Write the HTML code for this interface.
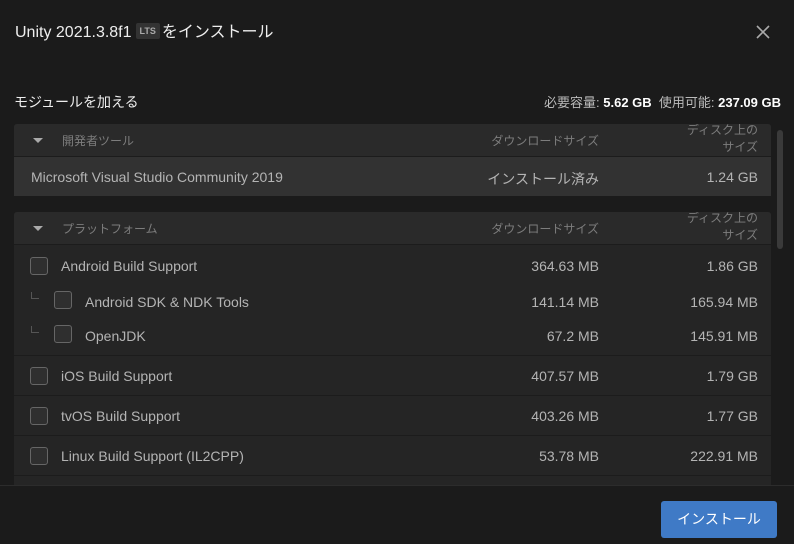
<!DOCTYPE html>
<html><head><meta charset="utf-8"><style>
*{margin:0;padding:0;box-sizing:border-box}
body{width:794px;height:544px;background:#1b1b1b;font-family:"Liberation Sans","Noto Sans CJK JP",sans-serif;color:#c4c4c4;position:relative;overflow:hidden}
.abs{position:absolute}
.title{left:15px;top:18px;font-size:16px;color:#eee;white-space:nowrap;font-weight:500}
.lts{display:inline-block;background:#333;color:#aaa;font-size:9px;font-weight:bold;padding:3px 4px;border-radius:2px;vertical-align:3px;margin:0 2px 0 4px}
.sec{left:14px;width:757px;background:#252525;border-radius:3px 3px 0 0;overflow:hidden}
.hdr{height:33px;background:#2a2a2a;border-bottom:1px solid #1c1c1c;position:relative;font-size:12px;color:#7d7d7d}
.row{position:relative;border-bottom:1px solid #1c1c1c;font-size:14px;color:#b4b4b4}
.c1{position:absolute;right:172px;text-align:right;white-space:nowrap}
.c2{position:absolute;right:13px;text-align:right;white-space:nowrap}
.cb{position:absolute;width:18px;height:18px;border:1px solid #666;border-radius:3px;background:#2f2f2f}
.tri{position:absolute;left:19px;top:14px;width:0;height:0;border-left:5px solid transparent;border-right:5px solid transparent;border-top:5px solid #aaa}
.tree{position:absolute;width:8px;height:7px;border-left:1px solid #555;border-bottom:1px solid #555}
.pl span{color:#b4b4b4}
</style></head><body>
<div class="abs title">Unity 2021.3.8f1<span class="lts">LTS</span><span style="font-weight:normal">をインストール</span></div>
<svg class="abs" style="left:755px;top:24px" width="16" height="16"><path d="M2 2L14 14M14 2L2 14" stroke="#aaa" stroke-width="1.6"/></svg>
<div class="abs" style="left:14px;top:92px;font-size:14px;color:#eee">モジュールを加える</div>
<div class="abs" style="right:13px;top:92px;font-size:13px;color:#bbb;white-space:nowrap">必要容量: <b style="color:#fff">5.62 GB</b>&nbsp; 使用可能: <b style="color:#fff">237.09 GB</b></div>

<div class="abs sec" style="top:124px;height:72px">
 <div class="hdr"><div class="tri"></div><span style="position:absolute;left:48px;top:8px">開発者ツール</span>
 <span class="c1" style="top:8px">ダウンロードサイズ</span><span class="c2" style="top:-2px;line-height:17px">ディスク上の<br>サイズ</span></div>
 <div class="row" style="height:39px;background:#323232;border:none"><span style="position:absolute;left:17px;top:12px">Microsoft Visual Studio Community 2019</span><span class="c1" style="top:12px">インストール済み</span><span class="c2" style="top:12px">1.24 GB</span></div>
</div>

<div class="abs sec pl" style="top:212px;height:273px">
 <div class="hdr"><div class="tri"></div><span style="position:absolute;left:48px;top:8px;color:#7d7d7d">プラットフォーム</span>
 <span class="c1" style="top:8px;color:#7d7d7d">ダウンロードサイズ</span><span class="c2" style="top:-2px;line-height:17px;color:#7d7d7d">ディスク上の<br>サイズ</span></div>
 <div style="position:relative;height:111px;border-bottom:1px solid #1c1c1c">
  <div class="cb" style="left:16px;top:12px"></div><span style="position:absolute;left:47px;top:13px;font-size:14px">Android Build Support</span><span class="c1" style="top:13px;font-size:14px">364.63 MB</span><span class="c2" style="top:13px;font-size:14px">1.86 GB</span>
  <div class="tree" style="left:17px;top:47px"></div><div class="cb" style="left:40px;top:46px"></div><span style="position:absolute;left:71px;top:49px;font-size:14px">Android SDK &amp; NDK Tools</span><span class="c1" style="top:49px;font-size:14px">141.14 MB</span><span class="c2" style="top:49px;font-size:14px">165.94 MB</span>
  <div class="tree" style="left:17px;top:81px"></div><div class="cb" style="left:40px;top:80px"></div><span style="position:absolute;left:71px;top:83px;font-size:14px">OpenJDK</span><span class="c1" style="top:83px;font-size:14px">67.2 MB</span><span class="c2" style="top:83px;font-size:14px">145.91 MB</span>
 </div>
 <div class="row" style="height:40px"><div class="cb" style="left:16px;top:11px"></div><span style="position:absolute;left:47px;top:12px">iOS Build Support</span><span class="c1" style="top:12px">407.57 MB</span><span class="c2" style="top:12px">1.79 GB</span></div>
 <div class="row" style="height:40px"><div class="cb" style="left:16px;top:11px"></div><span style="position:absolute;left:47px;top:12px">tvOS Build Support</span><span class="c1" style="top:12px">403.26 MB</span><span class="c2" style="top:12px">1.77 GB</span></div>
 <div class="row" style="height:40px"><div class="cb" style="left:16px;top:11px"></div><span style="position:absolute;left:47px;top:12px">Linux Build Support (IL2CPP)</span><span class="c1" style="top:12px">53.78 MB</span><span class="c2" style="top:12px">222.91 MB</span></div>
</div>
<div class="abs" style="left:0;top:485px;width:794px;height:59px;background:#1b1b1b;border-top:1px solid #2c2c2c"></div>
<div class="abs" style="left:777px;top:130px;width:6px;height:119px;background:#3a3a3a;border-radius:3px"></div>
<div class="abs" style="left:661px;top:501px;width:116px;height:37px;background:#3f7ac6;border-radius:3px;color:#fff;font-size:14px;text-align:center;line-height:37px">インストール</div>
</body></html>
